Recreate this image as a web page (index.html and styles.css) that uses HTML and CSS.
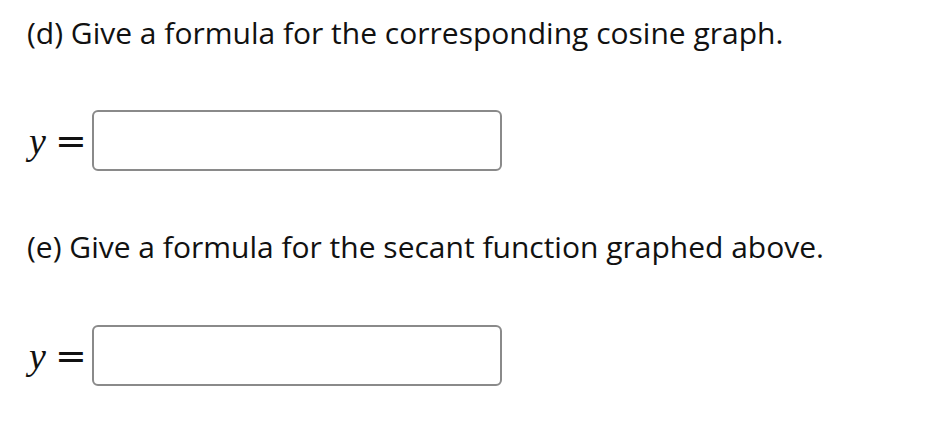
FILE: index.html
```html
<!DOCTYPE html>
<html>
<head>
<meta charset="utf-8">
<link rel="stylesheet" href="styles.css">
</head>
<body>
<div class="page">
  <p class="question">(d) Give a formula for the corresponding cosine graph.</p>
  <div class="answer">
    <span class="math"><span class="var">y</span><span class="eq">=</span></span>
    <div class="field"></div>
  </div>
  <p class="question q2">(e) Give a formula for the secant function graphed above.</p>
  <div class="answer a2">
    <span class="math"><span class="var">y</span><span class="eq">=</span></span>
    <div class="field"></div>
  </div>
</div>
</body>
</html>
```
FILE: styles.css
```css
html, body {
  margin: 0;
  padding: 0;
  background: #ffffff;
}
.page {
  padding: 13px 0 0 27px;
  font-family: "Open Sans", sans-serif;
  color: #111111;
}
.question {
  margin: 0;
  font-size: 30px;
  line-height: 40px;
}
.q2 {
  margin-top: 56px;
}
.answer {
  display: flex;
  align-items: center;
  margin-top: 57px;
}
.a2 {
  margin-top: 58px;
}
.math {
  display: flex;
  align-items: baseline;
  width: 65px;
  line-height: 40px;
}
.var {
  font-family: "Liberation Serif", serif;
  font-style: italic;
  font-size: 38px;
  margin-left: 2px;
}
.eq {
  font-family: "DejaVu Serif", serif;
  font-size: 38px;
  margin-left: 9px;
}
.field {
  width: 406px;
  height: 57px;
  border: 2px solid #8a8a8a;
  border-radius: 6px;
  background: #fff;
}
```
